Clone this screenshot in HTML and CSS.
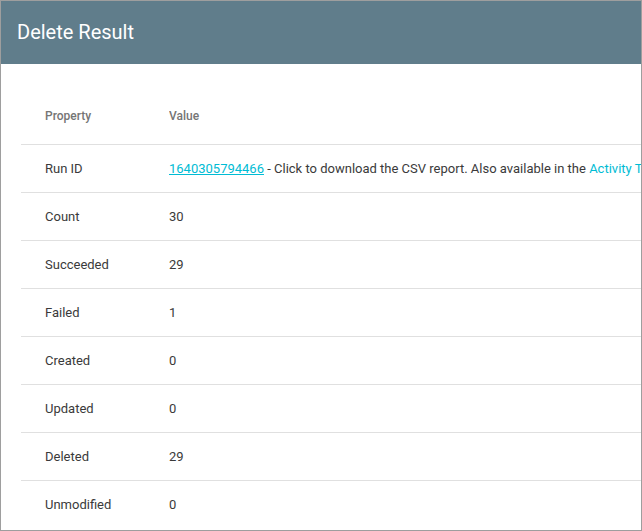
FILE: index.html
```html
<!doctype html>
<html>
<head>
  <link rel="stylesheet" href="styles.css">
</head>
<body>
<div class="b-dialog">
  <div class="b-dialog_title">Delete Result</div>
  <div class="b-dialog_content">
    <table class="b-table">
      <colgroup>
        <col class="b-table_prop">
        <col>
      </colgroup>
      <thead>
        <tr><th>Property</th><th>Value</th></tr>
      </thead>
      <tbody>
        <tr>
          <td>Run ID</td>
          <td><a class="b-link b-link__u" href="#">1640305794466</a> - Click to download the CSV report. Also available in the <a class="b-link" href="#">Activity Tab</a>.</td>
        </tr>
        <tr><td>Count</td><td>30</td></tr>
        <tr><td>Succeeded</td><td>29</td></tr>
        <tr><td>Failed</td><td>1</td></tr>
        <tr><td>Created</td><td>0</td></tr>
        <tr><td>Updated</td><td>0</td></tr>
        <tr><td>Deleted</td><td>29</td></tr>
        <tr><td>Unmodified</td><td>0</td></tr>
      </tbody>
    </table>
  </div>
</div>
</body>
</html>
```
FILE: styles.css
```css
html, body {
  margin : 0;
  padding : 0;
  background : #fff;
}
body {
  font-family: Roboto, "Liberation Sans", sans-serif;
  font-size : 13px;
  color : #3a3a3a;
}
.b-dialog {
  width : 640px;
  height : 529px;
  border : 1px solid #9e9e9e;
  overflow : hidden;
  background : #fff;
}
.b-dialog_title {
  height : 63px;
  line-height : 63px;
  padding : 0 16px;
  background : #607d8b;
  color : #fff;
  font-size : 20px;
  white-space : nowrap;
}
.b-dialog_content {
  padding : 24px 0 0 20px;
}
.b-table {
  border-collapse : collapse;
  table-layout : fixed;
  width : 760px;
  white-space : nowrap;
}
.b-table_prop {
  width : 148px;
}
.b-table th,
.b-table td {
  text-align : left;
  padding : 0;
  border-bottom : 1px solid #e0e0e0;
  vertical-align : middle;
  overflow : hidden;
}
.b-table th {
  height : 56px;
  font-size : 12px;
  font-weight : 500;
  color : #757575;
}
.b-table td {
  height : 46px;
  padding-bottom : 1px;
}
.b-table tr > :first-child {
  padding-left : 24px;
}
.b-table tbody tr:last-child td {
  border-bottom : 0;
}
.b-link {
  color : #00bcd4;
  text-decoration : none;
}
.b-link__u {
  text-decoration : underline;
}
```
